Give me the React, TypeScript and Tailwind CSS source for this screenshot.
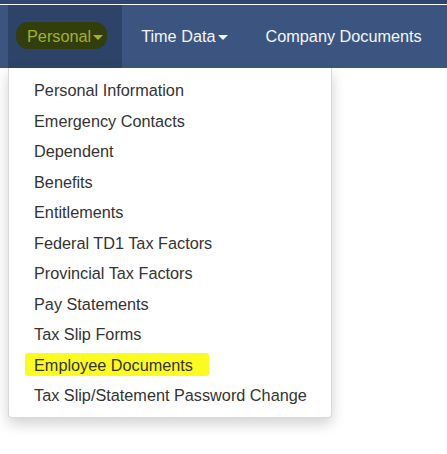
const MENU = [
  "Personal Information",
  "Emergency Contacts",
  "Dependent",
  "Benefits",
  "Entitlements",
  "Federal TD1 Tax Factors",
  "Provincial Tax Factors",
  "Pay Statements",
  "Tax Slip Forms",
  "Employee Documents",
  "Tax Slip/Statement Password Change",
];

function Caret({ className }: { className: string }) {
  return (
    <span
      className={`ml-[2px] mt-[2px] inline-block h-0 w-0 border-x-[5px] border-t-[5px] border-x-transparent align-middle ${className}`}
    />
  );
}

export default function App() {
  return (
    <div className="relative h-[454px] w-[447px] overflow-hidden bg-white font-['Liberation_Sans',Arial,sans-serif] text-[16.25px]">
      {/* top strip */}
      <div className="h-[4px] bg-[#2f4670]" />
      <div className="h-[1px] bg-white" />

      {/* nav */}
      <nav className="flex h-[63px] items-stretch bg-[#3b5580] pl-[8px] text-[#f2f5fb]">
        <div className="relative flex items-center bg-[#2d4368] px-[19px]">
          <span className="absolute left-[8px] top-[17px] h-[27px] w-[91px] rounded-[12px] bg-[#323e0c]" />
          <span className="relative flex items-center text-[#a3b22c]">
            Personal
            <Caret className="border-t-[#a3b22c]" />
          </span>
        </div>
        <div className="flex items-center px-[19px]">
          Time Data
          <Caret className="border-t-[#f2f5fb]" />
        </div>
        <div className="flex items-center px-[19px]">Company Documents</div>
      </nav>

      {/* dropdown */}
      <ul className="absolute left-[8px] top-[68px] w-[324px] rounded-b-[4px] border border-t-0 border-[rgba(0,0,0,0.15)] bg-white pb-[6px] pt-[7px] text-[#333] shadow-[0_6px_14px_rgba(0,0,0,0.18)]">
        {MENU.map((m) => (
          <li key={m} className="relative h-[30.5px] pl-[25px] leading-[30.5px]">
            {m === "Employee Documents" && (
              <span className="absolute left-[16px] top-[3px] h-[23px] w-[184px] rounded-[3px] bg-[#fbfb1f]" />
            )}
            <span className="relative">{m}</span>
          </li>
        ))}
      </ul>
    </div>
  );
}
